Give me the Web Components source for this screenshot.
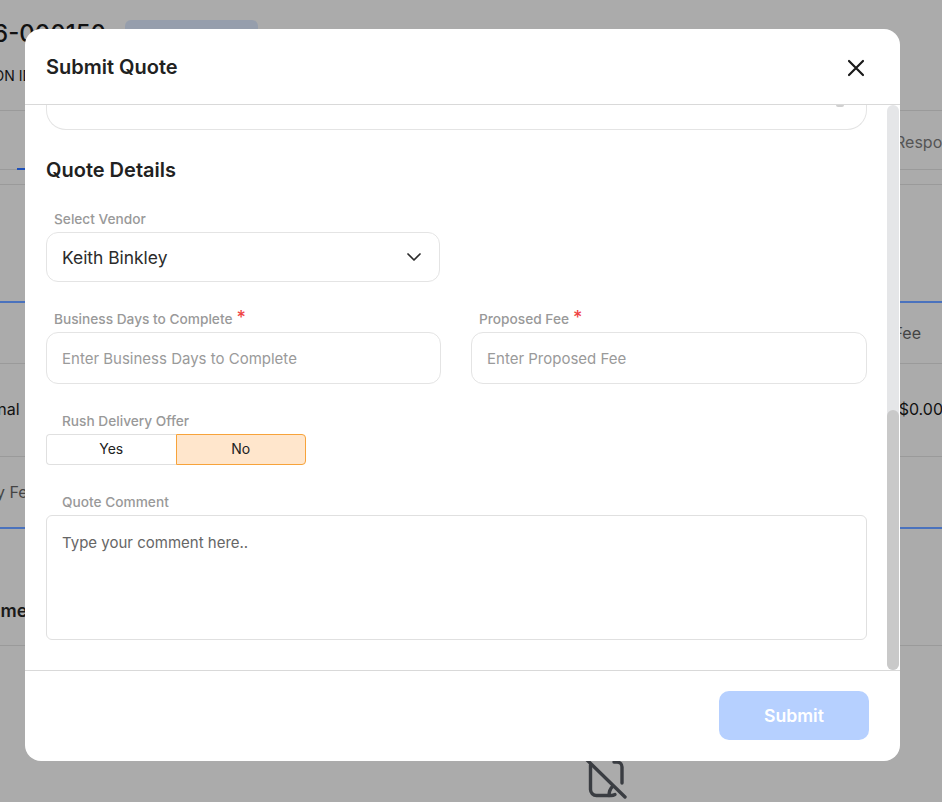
<!DOCTYPE html>
<html>
<head>
<meta charset="utf-8">
<title>Submit Quote</title>
<style>
  html, body { margin: 0; height: 100%; overflow: hidden; }
  body { font-family: Inter, "Liberation Sans", sans-serif; background: #ababab; }
</style>
</head>
<body>
<bg-page></bg-page>
<quote-modal>
  <span slot="title">Submit Quote</span>
  <quote-form></quote-form>
  <submit-button slot="footer">Submit</submit-button>
</quote-modal>

<script>
const line = '#9a9a9a';
const blue = '#4a72bd';

// the page under the dimmed overlay, mostly hidden by the modal
class BgPage extends HTMLElement {
    constructor(){
        super();
        this.attachShadow({mode: 'open'});
    }

    connectedCallback(){
        this.render()
    }

    render(){
        this.shadowRoot.innerHTML = `
        <style>
            :host { display: block; width: 942px; height: 802px; overflow: hidden; color: #111; }
            div { box-sizing: border-box; }
            .row { display: flex; justify-content: space-between; align-items: center; white-space: nowrap; }
            .head { height: 111px; border-bottom: 1px solid ${line}; padding-top: 20px; display: block; }
            .id { display: flex; align-items: flex-start; gap: 19px; height: 33px; margin-left: -52px; }
            .num { font-size: 24px; font-weight: 500; line-height: 28px; }
            .pill { width: 133px; height: 33px; border-radius: 6px; background: #969eac; }
            .sub { font-size: 14px; margin: 14px 0 0 -86px; }
            .tabs { height: 59px; border-bottom: 1px solid ${line}; position: relative; color: #555; font-size: 16px; padding: 4px 0 0 895px; }
            .tabs i { position: absolute; left: 17px; bottom: -1px; width: 20px; height: 2px; background: #1d4fb8; }
            .gap { height: 15px; border-bottom: 1px solid ${line}; }
            .spacer { height: 118px; border-bottom: 2px solid ${blue}; }
            .cols { height: 61px; border-bottom: 1px solid ${line}; color: #444; font-size: 16px; justify-content: flex-end; }
            .cols span { margin-right: 21px; }
            .cells { height: 93px; border-bottom: 1px solid ${line}; font-size: 16px; padding-bottom: 2px; }
            .cells b { font-weight: 400; margin-left: -56px; }
            .cells span { margin-right: -1px; }
            .total { height: 72px; border-bottom: 2px solid ${blue}; color: #444; font-size: 16px; }
            .total span { margin-left: -57px; }
            .foot { height: 117px; border-bottom: 1px solid ${line}; font-size: 18px; font-weight: 600; color: #1a1a1a; padding-top: 46px; }
            .foot span { margin-left: -40px; }
            .empty { padding: 114px 0 0 587px; }
            svg { display: block; overflow: visible; }
        </style>
        <div class="row head">
            <div class="id"><span class="num">2026-000150</span><span class="pill"></span></div>
            <div class="sub">TRANSACTION ID</div>
        </div>
        <div class="row tabs"><i></i><span>Responses</span></div>
        <div class="gap"></div>
        <div class="spacer"></div>
        <div class="row cols"><span>Fee</span></div>
        <div class="row cells"><b>Additional</b><span>$0.00</span></div>
        <div class="row total"><span>Delivery Fee</span></div>
        <div class="row foot"><span>Comments</span></div>
        <div class="empty">
            <svg width="40" height="40" viewBox="0 0 40 40" fill="none" stroke="#3a3d42" stroke-width="3.4" stroke-linecap="round" stroke-linejoin="round">
                <path d="M27 2h3a5 5 0 0 1 5 5V23"/>
                <path d="M3.5 5V29.500a6 6 0 0 0 6 6H24a8 8 0 0 0 4-1"/>
                <path d="M22 35.500c0-3.500 1-6.500 3.500-9"/>
                <path d="M-2-2L38 37"/>
            </svg>
        </div>
        `;
    }
}

class QuoteModal extends HTMLElement {
    constructor(){
        super();
        this.attachShadow({mode: 'open'});
    }

    connectedCallback(){
        this.render()
    }

    render(){
        this.shadowRoot.innerHTML = `
        <style>
            :host {
                position: absolute; left: 25px; top: 29px;
                width: 875px; height: 732px;
                display: flex; flex-direction: column;
                box-sizing: border-box;
                background: #fff; border-radius: 16px; overflow: hidden;
                color: #212121;
            }
            header { flex: none; height: 76px; box-sizing: border-box; display: flex; align-items: center; justify-content: space-between; padding: 0 34px 0 21px; border-bottom: 1px solid #d9d9d9; font-size: 20px; font-weight: 600; }
            header svg { display: block; margin-top: 2px; }
            .body { flex: 1; min-height: 0; position: relative; padding-left: 21px; overflow: hidden; }
            .track { position: absolute; right: 1px; top: 0; bottom: 0; width: 12px; border-radius: 6px; background: #e5e6e8; }
            .thumb { position: absolute; left: 0; right: 0; top: 305px; bottom: 0; border-radius: 6px; background: #c9c9c9; }
            footer { flex: none; height: 91px; box-sizing: border-box; border-top: 1px solid #d9d9d9; display: flex; align-items: center; justify-content: flex-end; padding: 0 31px 1px 0; }
        </style>
        <header>
            <slot name="title"></slot>
            <svg width="20" height="20" viewBox="0 0 20 20" fill="none" stroke="#1a1a1a" stroke-width="2.2" stroke-linecap="round"><path d="M3 3l14 14M17 3L3 17"/></svg>
        </header>
        <div class="body">
            <slot></slot>
            <div class="track"><div class="thumb"></div></div>
        </div>
        <footer><slot name="footer"></slot></footer>
        `;
    }
}

class FormField extends HTMLElement {
    constructor(){
        super();
        this.attachShadow({mode: 'open'});
    }

    connectedCallback(){
        this.render()
    }

    render(){
        const req = this.hasAttribute('required') ? '<em>*</em>' : '';
        const indent = this.getAttribute('indent') || '8';
        this.shadowRoot.innerHTML = `
        <style>
            :host { display: block; min-width: 0; }
            label { display: block; height: 18px; line-height: 20px; margin-left: ${indent}px; font-size: 13.7px; font-weight: 500; color: #999; white-space: nowrap; }
            em { font-style: normal; color: #ef4444; font-size: 18px; line-height: 14px; margin-left: 4px; }
        </style>
        <label>${this.getAttribute('label')}${req}</label>
        <slot></slot>
        `;
    }
}

class TextBox extends HTMLElement {
    constructor(){
        super();
        this.attachShadow({mode: 'open'});
    }

    connectedCallback(){
        this.render()
    }

    render(){
        this.shadowRoot.innerHTML = `
        <style>
            :host { display: flex; align-items: center; justify-content: space-between; box-sizing: border-box; height: 52px; margin-top: 5px; padding: 0 15px; border: 1px solid #e4e4e4; border-radius: 12px; background: #fff; font-size: 15px; color: #9a9a9a; white-space: nowrap; }
        </style>
        <slot></slot>
        `;
    }
}

class VendorSelect extends HTMLElement {
    constructor(){
        super();
        this.attachShadow({mode: 'open'});
    }

    connectedCallback(){
        this.render()
    }

    render(){
        this.shadowRoot.innerHTML = `
        <style>
            :host { display: flex; align-items: center; justify-content: space-between; box-sizing: border-box; width: 394px; height: 50px; margin-top: 5px; padding: 0 18px 0 15px; border: 1px solid #e4e4e4; border-radius: 12px; font-size: 17.4px; color: #2b2b2b; }
            svg { display: block; }
        </style>
        <slot></slot>
        <svg width="14" height="8" viewBox="0 0 14 8" fill="none" stroke="#2b2b2b" stroke-width="1.7" stroke-linecap="round" stroke-linejoin="round"><path d="M1 1l6 6 6-6"/></svg>
        `;
    }
}

class RushToggle extends HTMLElement {
    constructor(){
        super();
        this.attachShadow({mode: 'open'});
    }

    connectedCallback(){
        this.render()
    }

    render(){
        this.shadowRoot.innerHTML = `
        <style>
            :host { display: flex; width: 260px; height: 31px; margin-top: 5px; font-size: 14px; font-weight: 400; color: #222; }
            div { flex: 1; display: flex; align-items: center; justify-content: center; box-sizing: border-box; padding-bottom: 2px; }
            .yes { border: 1px solid #e0e0e0; border-right: 0; border-radius: 4px 0 0 4px; }
            .no { border: 1px solid #f7a33a; border-radius: 0 4px 4px 0; background: #ffe6cc; }
        </style>
        <div class="yes">Yes</div>
        <div class="no">No</div>
        `;
    }
}

class QuoteForm extends HTMLElement {
    constructor(){
        super();
        this.attachShadow({mode: 'open'});
    }

    connectedCallback(){
        this.render()
    }

    render(){
        this.shadowRoot.innerHTML = `
        <style>
            :host { display: block; width: 821px; }
            .clip { position: relative; height: 25px; box-sizing: border-box; border: 1px solid #e4e4e4; border-top: 0; border-radius: 0 0 20px 20px; }
            .clip i { position: absolute; top: 0; right: 22px; width: 8px; height: 1.5px; border-radius: 0 0 4px 4px; background: #d0d0d0; }
            h2 { margin: 27px 0 0; height: 26px; line-height: 26px; font-size: 20px; font-weight: 600; color: #212121; }
            .vendor { margin-top: 26px; }
            .two { display: grid; grid-template-columns: 395px 396px; column-gap: 30px; margin-top: 27px; width: 821px; }
            .rush { margin-top: 27px; }
            .comment { margin-top: 27px; }
            .area { height: 125px; margin-top: 5px; box-sizing: border-box; padding: 18px 15px; border: 1px solid #e0e0e0; border-radius: 6px; font-size: 15px; line-height: 18px; color: #666; }
        </style>
        <div class="clip"><i></i></div>
        <h2>Quote Details</h2>
        <form-field class="vendor" label="Select Vendor"><vendor-select>Keith Binkley</vendor-select></form-field>
        <div class="two">
            <form-field label="Business Days to Complete" required><text-box>Enter Business Days to Complete</text-box></form-field>
            <form-field label="Proposed Fee" required><text-box>Enter Proposed Fee</text-box></form-field>
        </div>
        <form-field class="rush" label="Rush Delivery Offer" indent="16"><rush-toggle></rush-toggle></form-field>
        <form-field class="comment" label="Quote Comment" indent="16"><div class="area">Type your comment here..</div></form-field>
        `;
    }
}

class SubmitButton extends HTMLElement {
    constructor(){
        super();
        this.attachShadow({mode: 'open'});
    }

    connectedCallback(){
        this.render()
    }

    render(){
        this.shadowRoot.innerHTML = `
        <style>
            :host { display: flex; align-items: center; justify-content: center; width: 150px; height: 49px; border-radius: 10px; background: #b6d0ff; color: #fff; font-size: 17.6px; font-weight: 600; }
        </style>
        <slot></slot>
        `;
    }
}

customElements.define('bg-page', BgPage)
customElements.define('quote-modal', QuoteModal)
customElements.define('form-field', FormField)
customElements.define('text-box', TextBox)
customElements.define('vendor-select', VendorSelect)
customElements.define('rush-toggle', RushToggle)
customElements.define('quote-form', QuoteForm)
customElements.define('submit-button', SubmitButton)
</script>
</body>
</html>
